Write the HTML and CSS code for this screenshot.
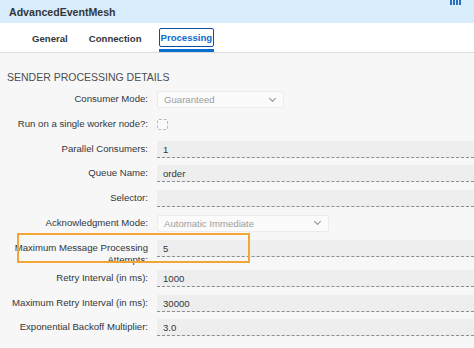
FILE: index.html
```html
<!DOCTYPE html>
<html lang="en">
<head>
<meta charset="UTF-8">
<meta name="viewport" content="width=device-width, initial-scale=1.0">
<title>AdvancedEventMesh</title>
<link rel="stylesheet" href="styles.css">
</head>
<body>

<div class="header">
    <span class="header-title">AdvancedEventMesh</span>
    <svg class="header-icon" width="12" height="6" viewBox="0 0 12 6">
        <rect x="0" y="0" width="2" height="5" fill="#2a6fc0"/>
        <rect x="3" y="0" width="2" height="5" fill="#2a6fc0"/>
        <rect x="6" y="0" width="2" height="5" fill="#2a6fc0"/>
        <rect x="9" y="0" width="2" height="5" fill="#2a6fc0"/>
    </svg>
</div>

<div class="tabs">
    <div class="tab">General</div>
    <div class="tab">Connection</div>
    <div class="tab tab-active"><span class="tab-focus">Processing</span></div>
</div>

<div class="content">
    <div class="section-title">SENDER PROCESSING DETAILS</div>

    <div class="form">
        <div class="form-row">
            <label class="form-label">Consumer Mode:</label>
            <div class="select select-short">
                <span>Guaranteed</span>
                <span class="chevron"></span>
            </div>
        </div>
        <div class="form-row">
            <label class="form-label">Run on a single worker node?:</label>
            <div class="checkbox"></div>
        </div>
        <div class="form-row">
            <label class="form-label">Parallel Consumers:</label>
            <div class="input">1</div>
        </div>
        <div class="form-row">
            <label class="form-label">Queue Name:</label>
            <div class="input">order</div>
        </div>
        <div class="form-row">
            <label class="form-label">Selector:</label>
            <div class="input"></div>
        </div>
        <div class="form-row">
            <label class="form-label">Acknowledgment Mode:</label>
            <div class="select select-long">
                <span>Automatic Immediate</span>
                <span class="chevron"></span>
            </div>
        </div>
        <div class="form-row">
            <label class="form-label form-label-wrap">Maximum Message Processing Attempts:</label>
            <div class="input">5</div>
            <div class="highlight"></div>
        </div>
        <div class="form-row">
            <label class="form-label">Retry Interval (in ms):</label>
            <div class="input">1000</div>
        </div>
        <div class="form-row">
            <label class="form-label">Maximum Retry Interval (in ms):</label>
            <div class="input">30000</div>
        </div>
        <div class="form-row">
            <label class="form-label">Exponential Backoff Multiplier:</label>
            <div class="input">3.0</div>
        </div>
    </div>
</div>

</body>
</html>
```

FILE: styles.css
```css
html {
    box-sizing: border-box;
  }

  *, *:before, *:after {
    box-sizing: inherit;
  }

  body {
    margin: 0;
    background: #f7f7f7;
    color: #32363a;
    font: 9.6px 'Liberation Sans', Arial, sans-serif;
  }

  .header {
    height: 23px;
    background: #d9ecfb;
    display: flex;
    align-items: center;
    padding: 0 0 0 9px;
    position: relative;
  }

  .header-title {
    font-weight: bold;
    font-size: 10.6px;
  }

  .header-icon {
    position: absolute;
    top: 0;
    right: 12px;
  }

  .tabs {
    height: 30px;
    background: white;
    display: flex;
    padding-left: 32px;
    gap: 21px;
    border-bottom: 1px solid #dcdcdc;
  }

  .tab {
    font-weight: bold;
    display: flex;
    align-items: center;
    padding-top: 1px;
  }

  .tab-active {
    color: #0a6ed1;
    border-bottom: 3px solid #0a6ed1;
    padding: 3px 0 0;
    margin-left: -4px;
  }

  .tab-focus {
    border: 1px solid #0a4f9e;
    border-radius: 2px;
    padding: 3px 1px;
  }

  .content {
    padding-top: 17px;
  }

  .section-title {
    padding-left: 7px;
    font-size: 10.5px;
    line-height: 14px;
    color: #4a4e52;
    margin-bottom: 3px;
  }

  .form-row {
    display: flex;
    align-items: flex-start;
    min-height: 24.8px;
    position: relative;
  }

  .form-label {
    width: 148px;
    flex: none;
    text-align: right;
    padding-top: 6px;
    line-height: 12px;
    white-space: nowrap;
  }

  .form-label-wrap {
    white-space: normal;
    padding-left: 14px;
  }

  .input, .select, .checkbox {
    margin-top: 4px;
    margin-left: 9px;
  }

  .input {
    flex: 1;
    height: 17px;
    background: #eeeeee;
    border-bottom: 1px dashed #8a8e92;
    padding: 0 6px;
    line-height: 17px;
    color: #32363a;
  }

  .select {
    height: 17px;
    background: #fbfbfb;
    border: 1px solid #ececec;
    border-radius: 2px;
    color: #9a9ea2;
    display: flex;
    align-items: center;
    justify-content: space-between;
    padding: 0 8px 0 6px;
  }

  .select-short {
    width: 127px;
  }

  .select-long {
    width: 172px;
  }

  .chevron {
    width: 5px;
    height: 5px;
    border-right: 1px solid #8a8e92;
    border-bottom: 1px solid #8a8e92;
    transform: rotate(45deg);
    margin-top: -3px;
  }

  .checkbox {
    width: 11px;
    height: 11px;
    margin-top: 7px;
    border: 1px dashed #b9bcbf;
    border-radius: 2px;
    background: #fafafa;
  }

  .highlight {
    position: absolute;
    left: 17px;
    top: -3px;
    width: 233px;
    height: 30px;
    border: 2px solid #f3a638;
  }
```
